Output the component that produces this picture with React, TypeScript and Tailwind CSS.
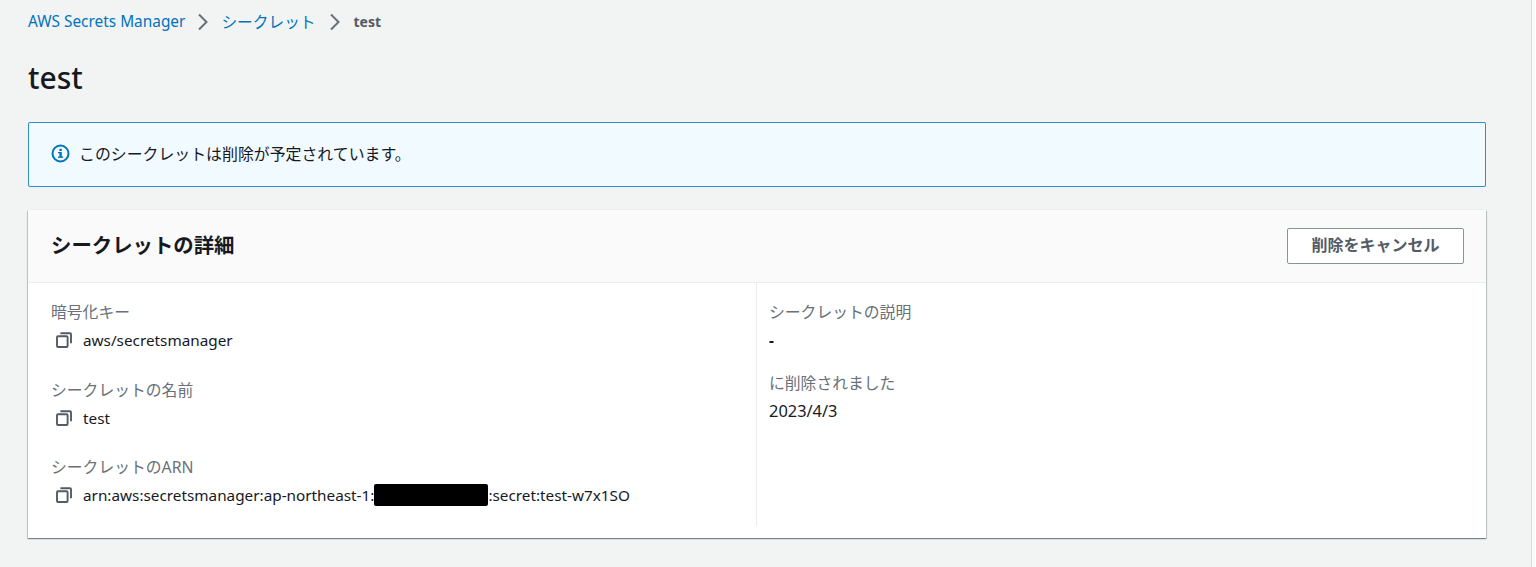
const font = "font-['Noto_Sans','Noto_Sans_CJK_JP',sans-serif]";

function CopyIcon() {
  return (
    <svg className="w-[16px] h-[16px] shrink-0" viewBox="0 0 16 16" fill="none" stroke="#545b64" strokeWidth="1.9">
      <rect x="1" y="4.2" width="10.6" height="10.8" rx="1" />
      <path d="M4.4 1.2h9.6a1 1 0 0 1 1 1v9" />
    </svg>
  );
}

function Chevron() {
  return (
    <svg className="w-[12px] h-[18px] shrink-0" viewBox="0 0 12 18" fill="none" stroke="#687078" strokeWidth="2">
      <path d="M2 1.5l7.5 7.5L2 16.5" />
    </svg>
  );
}

function Field({ label, children, copy }: { label: string; children: React.ReactNode; copy?: boolean }) {
  return (
    <div className="flex flex-col">
      <div className="text-[15.8px] leading-[22px] text-[#687078]">{label}</div>
      <div className="mt-[6px] flex items-center h-[22px] text-[15.3px] leading-[22px] text-[#16191f]">
        {copy && (
          <span className="ml-[5px] mr-[11px]">
            <CopyIcon />
          </span>
        )}
        {children}
      </div>
    </div>
  );
}

export default function App() {
  return (
    <div className={`${font} h-[567px] overflow-hidden bg-[#f2f3f3] flex`}>
      <div className="w-[1531px] shrink-0 pl-[28px] pr-[45px]">
        <nav className="flex items-center h-[22px] mt-[11px] text-[15.7px] leading-[22px]">
          <span className="text-[#0073bb] text-[15.4px]">AWS Secrets Manager</span>
          <span className="ml-[12px] mr-[12px]">
            <Chevron />
          </span>
          <span className="text-[#0073bb]">シークレット</span>
          <span className="ml-[13px] mr-[13px]">
            <Chevron />
          </span>
          <span className="text-[#545b64] font-bold text-[14px]">test</span>
        </nav>

        <h1 className="mt-[25px] text-[30px] leading-[40px] font-medium text-[#16191f]">test</h1>

        <div className="mt-[24px] h-[65px] flex items-center gap-[9px] pl-[22px] pb-[2px] rounded-[2px] border border-[#0073bb]/80 bg-[#f1faff]">
          <svg className="w-[19px] h-[19px] shrink-0" viewBox="0 0 19 19" fill="none">
            <circle cx="9.5" cy="9.5" r="8" stroke="#0073bb" strokeWidth="2" />
            <rect x="8.4" y="8" width="2.4" height="5.5" fill="#0073bb" />
            <rect x="8.4" y="4.8" width="2.4" height="2.2" fill="#0073bb" />
            <rect x="7" y="8" width="2" height="1.3" fill="#0073bb" />
            <rect x="7" y="12.5" width="5.2" height="1.3" fill="#0073bb" />
          </svg>
          <span className="text-[15.9px] leading-[22px] text-[#16191f]">このシークレットは削除が予定されています。</span>
        </div>

        <section className="mt-[23px] h-[328px] bg-white shadow-[0_1px_1px_0_rgba(0,28,36,0.3),1px_1px_1px_0_rgba(0,28,36,0.15),-1px_1px_1px_0_rgba(0,28,36,0.15),0_0_0_0.5px_rgba(0,28,36,0.05)]">
          <div className="h-[73px] flex items-center justify-between pl-[23px] pr-[22px] bg-[#fafafa] border-b border-[#eaeded]">
            <h2 className="text-[20.4px] leading-[28px] pb-[3px] font-bold text-[#16191f]">シークレットの詳細</h2>
            <button className="w-[177px] h-[36px] pb-[2px] bg-white border border-[#879596] rounded-[2px] text-[16px] font-bold text-[#545b64]">
              削除をキャンセル
            </button>
          </div>
          <div className="flex h-[243px]">
            <div className="w-[729px] shrink-0 border-r border-[#eaeded] pl-[23px] pt-[18px] flex flex-col gap-[27.5px]">
              <Field label="暗号化キー" copy>
                aws/secretsmanager
              </Field>
              <Field label="シークレットの名前" copy>
                test
              </Field>
              <Field label="シークレットのARN" copy>
                <span>arn:aws:secretsmanager:ap-northeast-1:</span>
                <span className="w-[114px] h-[22px] bg-black rounded-[2px] shrink-0" />
                <span>:secret:test-w7x1SO</span>
              </Field>
            </div>
            <div className="pl-[12px] pt-[18px] flex flex-col gap-[21px]">
              <Field label="シークレットの説明">
                <span className="font-bold">-</span>
              </Field>
              <Field label="に削除されました">
                <span className="text-[16.4px]">2023/4/3</span>
              </Field>
            </div>
          </div>
        </section>
      </div>
      <div className="w-[5px] border-l border-[#d5dbdb] bg-[#fafafa]" />
    </div>
  );
}
